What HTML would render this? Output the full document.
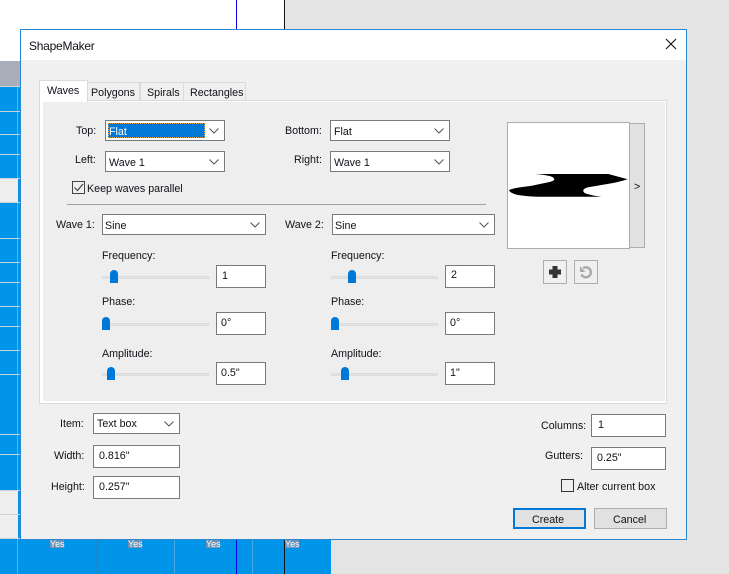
<!DOCTYPE html>
<html><head><meta charset="utf-8"><style>
html,body{margin:0;padding:0;width:729px;height:574px;overflow:hidden;background:#e4e4e4}
#r{position:relative;width:729px;height:574px;overflow:hidden;font:10.7px/14px "Liberation Sans",sans-serif;color:#101018}
#r div{position:absolute;box-sizing:border-box}
#r span{position:absolute;white-space:nowrap}
.s,.i{background:#fff;border:1px solid #7a7a7a}
.s svg{position:absolute;right:4px;top:6px}
.t{height:3px;width:107px;background:#e3e5e3;border:1px solid #dcdcdc}
.sep{left:0;width:20px;height:1px;background:#ccd4d8}
.th{width:8px;height:13px;background:#0078d7;border-radius:4px 4px 0 0}
.tab{background:#f0f0f0;border:1px solid #dadada;border-bottom:none;top:82px;height:18px}
.yes{top:540px;width:14px;height:8px;background:#6f94b8;color:#fff;font-size:9px;line-height:8px;text-align:center}
</style></head><body><div id="r">
<div style="left:0;top:0;width:284px;height:574px;background:#fff"></div>
<div style="left:236px;top:0;width:1px;height:30px;background:#0000e0"></div>
<div style="left:284px;top:0;width:1px;height:30px;background:#111"></div>
<div style="left:0;top:61px;width:20px;height:26px;background:#a9aebb"></div>
<div style="left:0;top:87px;width:21px;height:453px;background:#0095e8"></div>
<div style="left:17px;top:87px;width:1px;height:453px;background:#55b5ee"></div>
<div style="left:0;top:179px;width:17.5px;height:24px;background:#eee"></div>
<div style="left:0;top:491px;width:17.5px;height:48px;background:#eee"></div>
<div class="sep" style="top:86px"></div><div class="sep" style="top:111px"></div><div class="sep" style="top:134px"></div><div class="sep" style="top:154px"></div><div class="sep" style="top:178px"></div><div class="sep" style="top:202px"></div><div class="sep" style="top:238px"></div><div class="sep" style="top:262px"></div><div class="sep" style="top:282px"></div><div class="sep" style="top:306px"></div><div class="sep" style="top:326px"></div><div class="sep" style="top:350px"></div><div class="sep" style="top:374px"></div><div class="sep" style="top:434px"></div><div class="sep" style="top:454px"></div><div class="sep" style="top:490px"></div><div class="sep" style="top:514px"></div><div class="sep" style="top:538px"></div>

<div style="left:0;top:540px;width:331px;height:34px;background:#0095e8"></div>
<div style="left:17px;top:540px;width:1px;height:34px;background:#55b5ee"></div>
<div style="left:96px;top:540px;width:1px;height:34px;background:#1a86cc"></div>
<div style="left:174px;top:540px;width:1px;height:34px;background:#4aa8e2"></div>
<div style="left:252px;top:540px;width:1px;height:34px;background:#4aa8e2"></div>
<div style="left:236px;top:540px;width:1px;height:34px;background:#0000e0"></div>
<div style="left:284px;top:540px;width:1px;height:34px;background:#111"></div>
<div class="yes" style="left:50px">Yes</div><div class="yes" style="left:128px">Yes</div><div class="yes" style="left:206px">Yes</div><div class="yes" style="left:285px">Yes</div>

<!-- dialog -->
<div style="left:20px;top:29px;width:667px;height:511px;background:#f0f0f0;border:1px solid #2b85d0"></div>
<div style="left:21px;top:30px;width:665px;height:30px;background:#fff"></div>
<span style="left:29px;top:38px;font-size:12px;letter-spacing:-.25px;margin-top:1px">ShapeMaker</span>
<svg style="position:absolute;left:665px;top:38px" width="12" height="12"><path d="M1 1L11 11M11 1L1 11" stroke="#111" stroke-width="1.1" fill="none"/></svg>

<!-- panel -->
<div style="left:39px;top:100px;width:628px;height:304px;background:#f0f0f0;border:1px solid #dadada"></div>
<div style="left:40px;top:101px;width:626px;height:302px;border-style:solid;border-color:#fff;border-width:1px 1px 2px 3px;background:#eee"></div>
<div class="tab" style="left:87px;width:53px"></div>
<div class="tab" style="left:140px;width:44px"></div>
<div class="tab" style="left:183px;width:63px"></div>
<div style="left:39px;top:80px;width:49px;height:22px;background:#fff;border:1px solid #dadada;border-bottom:none"></div>
<span style="left:47px;top:84px">Waves</span>
<span style="left:91px;top:86px">Polygons</span>
<span style="left:147px;top:86px">Spirals</span>
<span style="left:190px;top:86px">Rectangles</span>

<!-- top selects -->
<span style="left:76px;top:124px">Top:</span>
<div class="s" style="left:105px;top:120px;width:120px;height:21px"><svg width="12" height="8"><path d="M1.5 1.5L6 6L10.5 1.5" stroke="#555" fill="none"/></svg></div>
<div style="left:108px;top:123px;width:97px;height:15px;background:#0078d7;outline:1px dotted #e8a040;outline-offset:-1px"></div>
<span style="left:109px;top:125px;color:#fff">Flat</span>
<span style="left:285px;top:124px">Bottom:</span>
<div class="s" style="left:330px;top:120px;width:120px;height:21px"><svg width="12" height="8"><path d="M1.5 1.5L6 6L10.5 1.5" stroke="#555" fill="none"/></svg></div>
<span style="left:334px;top:125px">Flat</span>
<span style="left:75px;top:153px">Left:</span>
<div class="s" style="left:105px;top:151px;width:120px;height:21px"><svg width="12" height="8"><path d="M1.5 1.5L6 6L10.5 1.5" stroke="#555" fill="none"/></svg></div>
<span style="left:109px;top:156px">Wave 1</span>
<span style="left:294px;top:153px">Right:</span>
<div class="s" style="left:330px;top:151px;width:120px;height:21px"><svg width="12" height="8"><path d="M1.5 1.5L6 6L10.5 1.5" stroke="#555" fill="none"/></svg></div>
<span style="left:334px;top:156px">Wave 1</span>

<div style="left:72px;top:181px;width:13px;height:13px;border:1px solid #444;background:#f0f0f0"></div>
<svg style="position:absolute;left:73px;top:182px" width="11" height="11"><path d="M1.5 5.5L4.5 8.5L10 2" stroke="#444" stroke-width="1.2" fill="none"/></svg>
<span style="left:87px;top:182px">Keep waves parallel</span>
<div style="left:67px;top:204px;width:419px;height:1px;background:#a0a0a0"></div>

<!-- wave 1 -->
<span style="left:56px;top:218px">Wave 1:</span>
<div class="s" style="left:102px;top:214px;width:164px;height:21px"><svg width="12" height="8"><path d="M1.5 1.5L6 6L10.5 1.5" stroke="#555" fill="none"/></svg></div>
<span style="left:105px;top:219px">Sine</span>
<span style="left:102px;top:249px">Frequency:</span>
<div class="t" style="left:102px;top:276px"></div><div class="th" style="left:110px;top:270px"></div>
<div class="i" style="left:216px;top:265px;width:50px;height:23px"></div><span style="left:222px;top:269px">1</span>
<span style="left:102px;top:295px">Phase:</span>
<div class="t" style="left:102px;top:323px"></div><div class="th" style="left:102px;top:317px"></div>
<div class="i" style="left:216px;top:312px;width:50px;height:23px"></div><span style="left:221px;top:316px">0°</span>
<span style="left:102px;top:347px">Amplitude:</span>
<div class="t" style="left:102px;top:373px"></div><div class="th" style="left:107px;top:367px"></div>
<div class="i" style="left:216px;top:362px;width:50px;height:23px"></div><span style="left:221px;top:366px">0.5"</span>

<!-- wave 2 -->
<span style="left:285px;top:218px">Wave 2:</span>
<div class="s" style="left:332px;top:214px;width:163px;height:21px"><svg width="12" height="8"><path d="M1.5 1.5L6 6L10.5 1.5" stroke="#555" fill="none"/></svg></div>
<span style="left:335px;top:219px">Sine</span>
<span style="left:331px;top:249px">Frequency:</span>
<div class="t" style="left:331px;top:276px"></div><div class="th" style="left:348px;top:270px"></div>
<div class="i" style="left:445px;top:265px;width:50px;height:23px"></div><span style="left:451px;top:268px">2</span>
<span style="left:331px;top:295px">Phase:</span>
<div class="t" style="left:331px;top:323px"></div><div class="th" style="left:331px;top:317px"></div>
<div class="i" style="left:445px;top:312px;width:50px;height:23px"></div><span style="left:450px;top:316px">0°</span>
<span style="left:331px;top:347px">Amplitude:</span>
<div class="t" style="left:331px;top:373px"></div><div class="th" style="left:341px;top:367px"></div>
<div class="i" style="left:445px;top:362px;width:50px;height:23px"></div><span style="left:450px;top:366px">1"</span>

<!-- preview -->
<div style="left:629px;top:123px;width:16px;height:125px;background:#e1e1e1;border:1px solid #adadad"></div>
<div style="left:507px;top:122px;width:123px;height:127px;background:#fff;border:1px solid #adadad"></div>
<span style="left:634px;top:180px">&gt;</span>
<svg style="position:absolute;left:0;top:0" width="729" height="574"><path d="M509 190C513 188 522 187 531.7 185.7L548.3 182.3C552 181.5 554.5 180.5 554.3 179.3C554 177.5 552 176.5 548.3 175.7C544 174.8 540 174.3 535 174L608.3 174L627.7 179.3C622 181 617 182.4 611.7 183.3L588.3 187.3C585 188 583.3 189.3 583.3 190.7C583.3 192.3 585 193.5 588.3 194.3C592 195.5 597 196.2 601.7 196.7L538.3 196.7C530 196.5 524 196 518.3 195C513 194 509.5 192 509 190Z" fill="#000"/></svg>
<div style="left:543px;top:260px;width:24px;height:24px;background:#efefef;border:1px solid #adadad"></div>
<svg style="position:absolute;left:548px;top:265px" width="14" height="14"><path d="M4.5 1H9.5V4.5H13V9.5H9.5V13H4.5V9.5H1V4.5H4.5Z" fill="#333"/></svg>
<div style="left:574px;top:260px;width:24px;height:24px;background:#efefef;border:1px solid #adadad"></div>
<svg style="position:absolute;left:578px;top:264px" width="16" height="16"><path d="M5 4.2A5 5 0 1 1 3.4 10.5" stroke="#a8a8a8" stroke-width="2.4" fill="none"/><path d="M2 2.5V8H7.5Z" fill="#a8a8a8"/></svg>

<!-- bottom -->
<span style="left:60px;top:417px">Item:</span>
<div class="s" style="left:93px;top:413px;width:87px;height:21px"><svg width="12" height="8"><path d="M1.5 1.5L6 6L10.5 1.5" stroke="#555" fill="none"/></svg></div>
<span style="left:97px;top:417px">Text box</span>
<span style="left:54px;top:449px">Width:</span>
<div class="i" style="left:93px;top:445px;width:87px;height:23px"></div><span style="left:99px;top:449px">0.816"</span>
<span style="left:51px;top:480px">Height:</span>
<div class="i" style="left:93px;top:476px;width:87px;height:23px"></div><span style="left:99px;top:480px">0.257"</span>
<span style="left:541px;top:419px">Columns:</span>
<div class="i" style="left:591px;top:414px;width:75px;height:23px"></div><span style="left:598px;top:418px">1</span>
<span style="left:545px;top:449px">Gutters:</span>
<div class="i" style="left:591px;top:447px;width:75px;height:23px"></div><span style="left:597px;top:451px">0.25"</span>
<div style="left:561px;top:479px;width:13px;height:13px;border:1px solid #333;background:#f0f0f0"></div>
<span style="left:577px;top:480px">Alter current box</span>
<div style="left:513px;top:508px;width:73px;height:21px;background:#e1e1e1;border:2px solid #0078d7"></div>
<span style="left:532px;top:513px">Create</span>
<div style="left:594px;top:508px;width:73px;height:21px;background:#e1e1e1;border:1px solid #adadad"></div>
<span style="left:613px;top:513px">Cancel</span>
</div></body></html>
